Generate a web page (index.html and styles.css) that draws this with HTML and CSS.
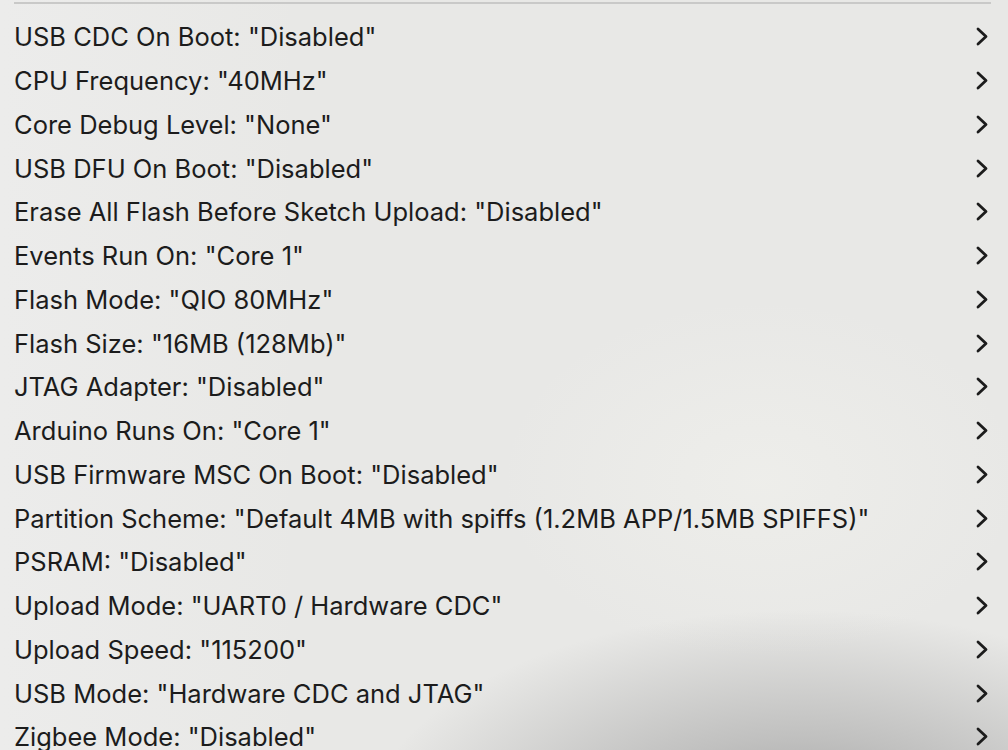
FILE: index.html
```html
<!DOCTYPE html>
<html>
<head>
<meta charset="utf-8">
<link rel="stylesheet" href="styles.css">
</head>
<body>
<div class="menu">
  <div class="sep"></div>
  <ul class="items">
    <li class="item"><span class="label">USB CDC On Boot: "Disabled"</span><svg class="chev" viewBox="0 0 12 19"><path d="M2 2 L10 9.5 L2 17"/></svg></li>
    <li class="item"><span class="label">CPU Frequency: "40MHz"</span><svg class="chev" viewBox="0 0 12 19"><path d="M2 2 L10 9.5 L2 17"/></svg></li>
    <li class="item"><span class="label">Core Debug Level: "None"</span><svg class="chev" viewBox="0 0 12 19"><path d="M2 2 L10 9.5 L2 17"/></svg></li>
    <li class="item"><span class="label">USB DFU On Boot: "Disabled"</span><svg class="chev" viewBox="0 0 12 19"><path d="M2 2 L10 9.5 L2 17"/></svg></li>
    <li class="item"><span class="label">Erase All Flash Before Sketch Upload: "Disabled"</span><svg class="chev" viewBox="0 0 12 19"><path d="M2 2 L10 9.5 L2 17"/></svg></li>
    <li class="item"><span class="label">Events Run On: "Core 1"</span><svg class="chev" viewBox="0 0 12 19"><path d="M2 2 L10 9.5 L2 17"/></svg></li>
    <li class="item"><span class="label">Flash Mode: "QIO 80MHz"</span><svg class="chev" viewBox="0 0 12 19"><path d="M2 2 L10 9.5 L2 17"/></svg></li>
    <li class="item"><span class="label">Flash Size: "16MB (128Mb)"</span><svg class="chev" viewBox="0 0 12 19"><path d="M2 2 L10 9.5 L2 17"/></svg></li>
    <li class="item"><span class="label">JTAG Adapter: "Disabled"</span><svg class="chev" viewBox="0 0 12 19"><path d="M2 2 L10 9.5 L2 17"/></svg></li>
    <li class="item"><span class="label">Arduino Runs On: "Core 1"</span><svg class="chev" viewBox="0 0 12 19"><path d="M2 2 L10 9.5 L2 17"/></svg></li>
    <li class="item"><span class="label">USB Firmware MSC On Boot: "Disabled"</span><svg class="chev" viewBox="0 0 12 19"><path d="M2 2 L10 9.5 L2 17"/></svg></li>
    <li class="item"><span class="label">Partition Scheme: "Default 4MB with spiffs (1.2MB APP/1.5MB SPIFFS)"</span><svg class="chev" viewBox="0 0 12 19"><path d="M2 2 L10 9.5 L2 17"/></svg></li>
    <li class="item"><span class="label">PSRAM: "Disabled"</span><svg class="chev" viewBox="0 0 12 19"><path d="M2 2 L10 9.5 L2 17"/></svg></li>
    <li class="item"><span class="label">Upload Mode: "UART0 / Hardware CDC"</span><svg class="chev" viewBox="0 0 12 19"><path d="M2 2 L10 9.5 L2 17"/></svg></li>
    <li class="item"><span class="label">Upload Speed: "115200"</span><svg class="chev" viewBox="0 0 12 19"><path d="M2 2 L10 9.5 L2 17"/></svg></li>
    <li class="item"><span class="label">USB Mode: "Hardware CDC and JTAG"</span><svg class="chev" viewBox="0 0 12 19"><path d="M2 2 L10 9.5 L2 17"/></svg></li>
    <li class="item"><span class="label">Zigbee Mode: "Disabled"</span><svg class="chev" viewBox="0 0 12 19"><path d="M2 2 L10 9.5 L2 17"/></svg></li>
  </ul>
</div>
</body>
</html>
```

FILE: styles.css
```css
html, body {
  margin: 0;
  padding: 0;
  width: 1008px;
  height: 750px;
  overflow: hidden;
}
body {
  background-color: #e8e8e6;
  background-image:
    radial-gradient(ellipse 440px 230px at 800px 840px, rgba(150,150,150,0.95), rgba(160,160,160,0.55) 45%, rgba(170,170,170,0) 100%),
    radial-gradient(ellipse 260px 180px at 760px 480px, rgba(240,240,236,0.7), rgba(240,240,236,0) 100%),
    linear-gradient(to right, rgba(240,240,240,0.5), rgba(240,240,240,0) 30%);
  font-family: Inter, "Liberation Sans", sans-serif;
  color: #1c1c1c;
}
.menu {
  padding: 2px 17px 0 14px;
}
.sep {
  height: 2px;
  background: #c9c9c8;
}
.items {
  list-style: none;
  margin: 11px 0 0 0;
  padding: 0;
}
.item {
  height: 43.75px;
  display: flex;
  align-items: center;
  justify-content: space-between;
}
.label {
  font-size: 25.5px;
  white-space: nowrap;
}
.chev {
  width: 12px;
  height: 19px;
  margin-right: 3px;
  fill: none;
  stroke: #1c1c1c;
  stroke-width: 2.8;
  stroke-linecap: round;
  stroke-linejoin: round;
}
```
